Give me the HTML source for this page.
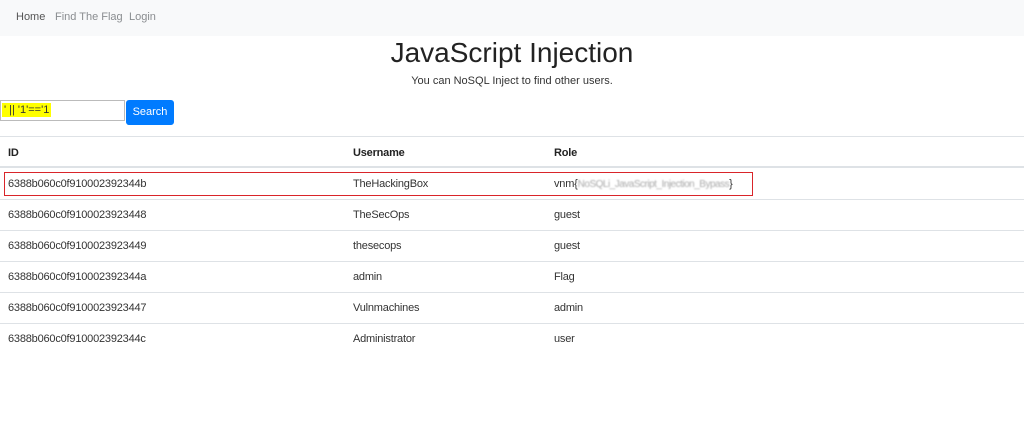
<!DOCTYPE html><html><head><style>
body{margin:0;width:1024px;height:429px;background:#fff;font-family:"Liberation Sans",sans-serif;color:#333;position:relative;overflow:hidden}
.nav{position:absolute;left:0;top:0;width:1024px;height:36px;background:#f8f9fa;font-size:11px}
.nav span{position:absolute;top:11px;color:#8a8d90}
h1{position:absolute;top:36px;left:0;width:1024px;text-align:center;margin:0;font-size:28px;font-weight:400;line-height:34px;color:#222}
.sub{position:absolute;top:75px;width:1024px;text-align:center;font-size:11px}
.inp{position:absolute;left:0;top:100px;width:123px;height:19px;border:1px solid #bbb;background:#fff}
.inp span{position:absolute;left:1px;top:2px;background:#ffff00;font-size:11px;padding:0 2px;height:14px;line-height:14px}
.btn{position:absolute;left:126px;top:100px;width:48px;height:25px;background:#007bff;color:#fff;border-radius:3px;font-size:11px;text-align:center;line-height:25px}
.line{position:absolute;left:0;width:1024px;height:1px;background:#dee2e6}
.t{position:absolute;font-size:11px;letter-spacing:-0.2px}
.b{font-weight:bold;color:#222}
.red{position:absolute;left:4px;top:172px;width:747px;height:22px;border:1px solid #d9252a}
.blur{color:#aaa;filter:blur(0.7px);font-size:10px;letter-spacing:-0.5px}
</style></head><body>
<div class="nav"><span style="left:16px;color:#555">Home</span><span style="left:55px">Find The Flag</span><span style="left:129px">Login</span></div>
<h1>JavaScript Injection</h1>
<div class="sub">You can NoSQL Inject to find other users.</div>
<div class="inp"><span>' || '1'=='1</span></div>
<div class="btn">Search</div>
<div class="line" style="top:136px"></div>
<div class="t b" style="left:8px;top:147px">ID</div><div class="t b" style="left:353px;top:147px">Username</div><div class="t b" style="left:554px;top:147px">Role</div>
<div class="line" style="top:166px;height:2px"></div>
<div class="red"></div>
<div class="t" style="left:8px;top:178px">6388b060c0f910002392344b</div><div class="t" style="left:353px;top:178px">TheHackingBox</div><div class="t" style="left:554px;top:178px">vnm{<span class="blur">NoSQLi_JavaScript_Injection_Bypass</span>}</div>
<div class="line" style="top:199px"></div>
<div class="t" style="left:8px;top:209px">6388b060c0f9100023923448</div><div class="t" style="left:353px;top:209px">TheSecOps</div><div class="t" style="left:554px;top:209px">guest</div>
<div class="line" style="top:230px"></div>
<div class="t" style="left:8px;top:240px">6388b060c0f9100023923449</div><div class="t" style="left:353px;top:240px">thesecops</div><div class="t" style="left:554px;top:240px">guest</div>
<div class="line" style="top:261px"></div>
<div class="t" style="left:8px;top:271px">6388b060c0f910002392344a</div><div class="t" style="left:353px;top:271px">admin</div><div class="t" style="left:554px;top:271px">Flag</div>
<div class="line" style="top:292px"></div>
<div class="t" style="left:8px;top:302px">6388b060c0f9100023923447</div><div class="t" style="left:353px;top:302px">Vulnmachines</div><div class="t" style="left:554px;top:302px">admin</div>
<div class="line" style="top:323px"></div>
<div class="t" style="left:8px;top:333px">6388b060c0f910002392344c</div><div class="t" style="left:353px;top:333px">Administrator</div><div class="t" style="left:554px;top:333px">user</div>
</body></html>
